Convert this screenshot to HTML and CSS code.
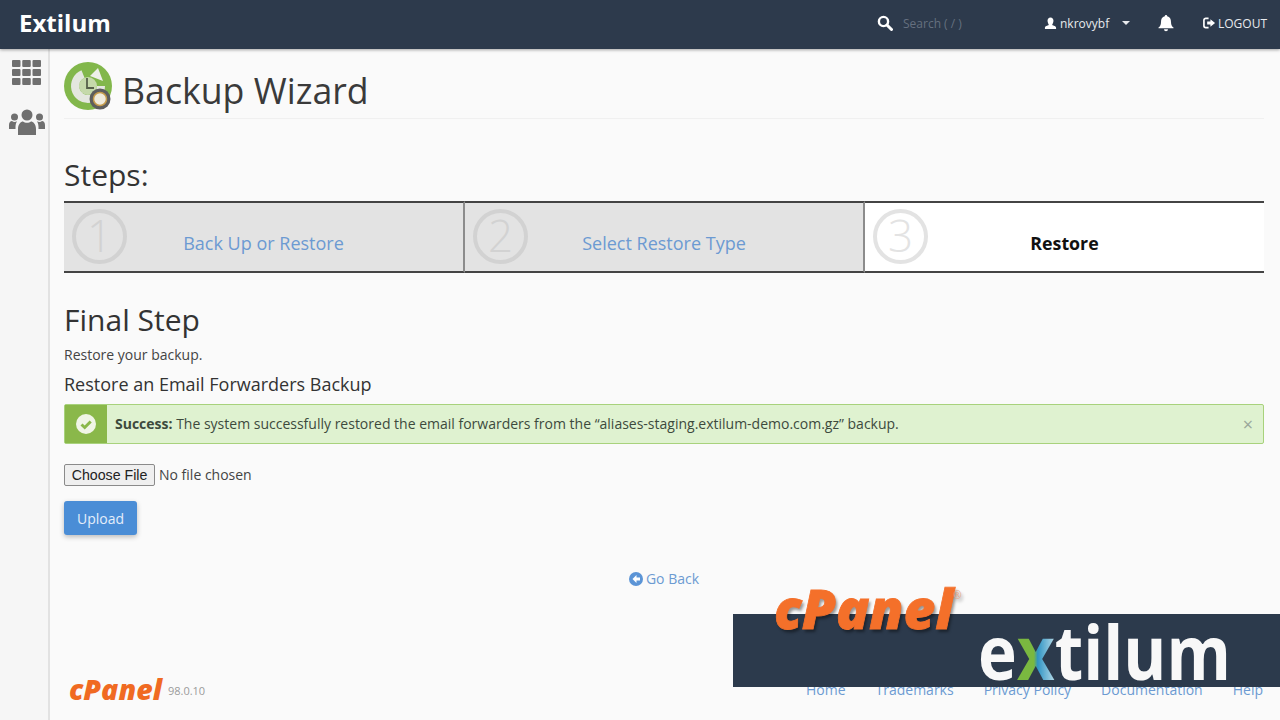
FILE: index.html
```html
<!DOCTYPE html>
<html lang="en">
<head>
  <meta charset="utf-8" />
  <title>Backup Wizard</title>
  <link rel="stylesheet" href="styles.css">
</head>
<body>
  <header class="topbar">
    <div class="brand">Extilum</div>
    <div class="top-right">
      <div class="search">
        <svg class="search-icon" viewBox="0 0 16 16"><circle cx="6.5" cy="6.5" r="4.6" fill="none" stroke="#fff" stroke-width="2.4"/><path d="M10 10l4.5 4.5" stroke="#fff" stroke-width="3" stroke-linecap="round"/></svg>
        <span class="search-text">Search ( / )</span>
      </div>
      <div class="user">
        <svg class="user-icon" viewBox="0 0 14 14"><path d="M7 .5c2 0 3.2 1.500 3.200 3.500S9 7.500 8.800 8.500c1.500.8 4.200 1 4.200 3V13H1v-1.500c0-2 2.700-2.200 4.200-3C5 7.500 3.800 6 3.800 4S5 .5 7 .5z" fill="#fff"/></svg>
        <span>nkrovybf</span>
        <span class="caret"></span>
      </div>
      <div class="bell">
        <svg viewBox="0 0 16 18" width="16" height="18"><path d="M8 1a1.200 1.200 0 0 1 1.200 1.300C12 3 13 5 13 8c0 3 1 4.500 2.500 5.500v.7H.5v-.7C2 12.500 3 11 3 8c0-3 1-5 3.800-5.700A1.200 1.200 0 0 1 8 1zM6 15.200h4a2 2 0 0 1-4 0z" fill="#fff"/></svg>
      </div>
      <div class="logout">
        <svg viewBox="0 0 14 12" width="13" height="12"><path d="M6 1H3a2 2 0 0 0-2 2v6a2 2 0 0 0 2 2h3" fill="none" stroke="#fff" stroke-width="1.800"/><path d="M4.500 4.500H8V2l5 4-5 4V7.500H4.500z" fill="#fff"/></svg>
        <span>LOGOUT</span>
      </div>
    </div>
  </header>

  <div class="layout">
    <aside class="sidebar">
      <svg class="side-grid" viewBox="0 0 29 25">
        <rect x="0" y="0" width="8.500" height="7" rx="1"/><rect x="10.250" y="0" width="8.500" height="7" rx="1"/><rect x="20.500" y="0" width="8.500" height="7" rx="1"/>
        <rect x="0" y="9" width="8.500" height="7" rx="1"/><rect x="10.250" y="9" width="8.500" height="7" rx="1"/><rect x="20.500" y="9" width="8.500" height="7" rx="1"/>
        <rect x="0" y="18" width="8.500" height="7" rx="1"/><rect x="10.250" y="18" width="8.500" height="7" rx="1"/><rect x="20.500" y="18" width="8.500" height="7" rx="1"/>
      </svg>
      <svg class="side-users" viewBox="0 0 36 26">
        <circle cx="18" cy="6" r="5.500"/><circle cx="5.500" cy="8" r="3.500"/><circle cx="30.500" cy="8" r="3.500"/>
        <path d="M9 26v-6c0-5 3-7.500 5-7.500 1 .8 2.400 1.300 4 1.300s3-.5 4-1.300c2 0 5 2.500 5 7.500v6z"/>
        <path d="M0 20v-4c0-2.500 1.500-4 3-4 .8.600 1.600.9 2.500.9 1 0 1.700-.2 2.500-.7-.9 1.500-1.500 3.500-1.500 5.800V20zM36 20v-4c0-2.500-1.500-4-3-4-.8.600-1.600.9-2.500.9-1 0-1.700-.2-2.500-.7.900 1.500 1.500 3.500 1.500 5.800V20z"/>
      </svg>
    </aside>

    <main class="content">
      <div class="page-head">
        <svg class="wizard-icon" viewBox="0 0 48 48">
          <circle cx="24" cy="24" r="24" fill="#82b74b"/>
          <circle cx="24" cy="24" r="9" fill="#c5d9aa"/>
          <path d="M19 12A13 13 0 1 0 37 24" fill="none" stroke="#e4e7df" stroke-width="8"/>
          <path d="M26 14l8-8 5 13z" fill="#eef0ea"/>
          <path d="M23 16v10h7" fill="none" stroke="#56604a" stroke-width="1.800"/>
          <circle cx="36" cy="37" r="10.500" fill="#5d5d5d"/>
          <circle cx="36" cy="37" r="6.500" fill="#efeadc" stroke="#c49a4a" stroke-width="1.500"/>
        </svg>
        <h1>Backup Wizard</h1>
      </div>

      <h2 class="steps-title">Steps:</h2>
      <div class="steps">
        <div class="step"><span class="num">1</span><a class="step-label">Back Up or Restore</a></div>
        <div class="step"><span class="num">2</span><a class="step-label">Select Restore Type</a></div>
        <div class="step current"><span class="num">3</span><span class="step-label">Restore</span></div>
      </div>

      <h2 class="final-title">Final Step</h2>
      <p class="intro">Restore your backup.</p>
      <h3 class="sub-title">Restore an Email Forwarders Backup</h3>

      <div class="alert">
        <div class="alert-icon">
          <svg viewBox="0 0 20 20" width="20" height="20"><circle cx="10" cy="10" r="10" fill="#f0f5e6"/><path d="M5.500 10.500l3.200 3 6-6" fill="none" stroke="#8ab84a" stroke-width="3"/></svg>
        </div>
        <div class="alert-text"><strong>Success:</strong> The system successfully restored the email forwarders from the “aliases-staging.extilum-demo.com.gz” backup.</div>
        <span class="alert-close">×</span>
      </div>

      <input class="file" type="file" />
      <button type="button" class="upload">Upload</button>

      <div class="go-back">
        <svg viewBox="0 0 14 14" width="14" height="14"><circle cx="7" cy="7" r="7" fill="#5b94d6"/><path d="M7.500 3L3.500 7l4 4V8.500H11v-3H7.500z" fill="#fff"/></svg>
        <a>Go Back</a>
      </div>

      <footer class="foot">
        <div class="foot-left"><span class="cp-small">cPanel</span><span class="version">98.0.10</span></div>
        <nav class="foot-links"><a>Home</a><a>Trademarks</a><a>Privacy Policy</a><a>Documentation</a><a>Help</a></nav>
      </footer>
    </main>
  </div>

  <div class="promo">
    <span class="cp-large">cPanel<sup>®</sup></span>
    <span class="ex-logo">e<span class="ex-x">x</span>tilum</span>
  </div>
</body>
</html>
```

FILE: styles.css
```css
* { box-sizing: border-box; }
html, body { height: 100%; }
body {
  margin: 0;
  overflow: hidden;
  background: #fafafa;
  color: #333;
  font-family: "Open Sans", sans-serif;
  font-size: 14px;
}
a { color: #6c9ad2; }

.topbar {
  height: 49px;
  background: #2d3a4c;
  display: flex;
  align-items: center;
  justify-content: space-between;
  box-shadow: 0 1px 3px rgba(0,0,0,.35);
  position: relative;
  padding-bottom: 3px;
}
.brand {
  margin-left: 19px;
  margin-bottom: 2px;
  color: #fff;
  font-size: 24px;
  font-weight: 700;
}
.top-right { display: flex; align-items: center; color: #e8eaed; font-size: 12px; }
.search { display: flex; align-items: center; width: 155px; }
.search-icon { width: 16px; height: 16px; margin-right: 10px; }
.search-text { color: #65707f; }
.user { display: flex; align-items: center; width: 122px; padding-left: 12px; }
.user-icon { width: 13px; height: 13px; margin-right: 3px; }
.caret {
  margin-left: 13px;
  border-top: 4px solid #e8eaed;
  border-left: 4px solid transparent;
  border-right: 4px solid transparent;
}
.bell { width: 49px; display: flex; justify-content: flex-start; padding-left: 4px; }
.logout { display: flex; align-items: center; gap: 2px; margin-right: 13px; width: 64px; white-space: nowrap; }

.layout { display: flex; height: 671px; }
.sidebar {
  width: 50px;
  flex: none;
  background: #f6f6f6;
  border-right: 2px solid #e2e2e2;
  display: flex;
  flex-direction: column;
  align-items: center;
  padding-top: 11px;
}
.sidebar svg { fill: #6f6f6f; }
.side-grid { width: 29px; height: 25px; margin-left: 5px; }
.side-users { width: 36px; height: 26px; margin-top: 24px; margin-left: 6px; }

.content {
  flex: 1;
  padding: 0 16px 0 14px;
  display: flex;
  flex-direction: column;
  min-width: 0;
}
.page-head {
  height: 70px;
  display: flex;
  align-items: flex-start;
  border-bottom: 1px solid #f0f0f0;
  padding-top: 13px;
}
.wizard-icon { width: 48px; height: 48px; margin-right: 10px; }
h1 { margin: 6px 0 0; font-size: 35.7px; font-weight: 400; line-height: 44px; color: #3a3a3a; }
h2 { font-weight: 400; font-size: 30px; line-height: 38px; color: #333; margin: 0; }
.steps-title { margin-top: 37px; }
.steps { display: flex; margin-top: 7px; height: 72px; }
.step {
  width: 400px;
  background: #e3e3e3;
  border-top: 2px solid #444;
  border-bottom: 2px solid #444;
  border-right: 2px solid #8c8c8c;
  display: flex;
  align-items: center;
  justify-content: center;
  position: relative;
}
.step:first-child { width: 401px; }
.step.current { background: #fff; border-right: 0; flex: 1; }
.num {
  position: absolute;
  left: 8px;
  top: 6px;
  width: 55px;
  height: 55px;
  border: 4px solid #d2d2d2;
  border-radius: 50%;
  color: #d2d2d2;
  font-size: 44px;
  font-weight: 300;
  line-height: 45px;
  text-align: center;
}
.current .num { border-color: #e3e3e3; color: #e3e3e3; }
.step-label { font-size: 18px; margin-top: 12px; }
.current .step-label { font-weight: 700; color: #111; font-size: 17.8px; }

.final-title { margin-top: 28px; }
.intro { margin: 6px 0 0; line-height: 20px; font-size: 14px; color: #444; }
.sub-title { margin: 7px 0 0; font-size: 18px; font-weight: 400; line-height: 24px; }

.alert {
  margin-top: 8px;
  height: 40px;
  display: flex;
  align-items: center;
  background: #dff2d0;
  border: 1px solid #a8d27c;
  border-radius: 2px;
}
.alert-icon {
  width: 42px;
  height: 38px;
  flex: none;
  background: #8ab84a;
  display: flex;
  align-items: center;
  justify-content: center;
}
.alert-text { flex: 1; padding: 0 0 2px 8px; font-size: 14px; color: #3d4a3d; }
.alert-close { color: #9aa79a; font-size: 18px; line-height: 1; margin-right: 10px; }

.file {
  margin-top: 20px;
  height: 22px;
  width: 260px;
  font-family: "Open Sans", sans-serif;
  font-size: 14px;
  color: #444;
}
.file::file-selector-button {
  font-family: "Liberation Sans", sans-serif;
  font-size: 14.2px;
  width: 91px;
  height: 22px;
  margin-right: 4px;
  color: #222;
  background: #efefef;
  border: 1px solid #8a8a8a;
  border-radius: 2px;
}
.upload {
  margin-top: 15px;
  width: 73px;
  height: 34px;
  background: #4a8dd6;
  color: #e4eefa;
  border: 0;
  border-radius: 3px;
  font-family: "Open Sans", sans-serif;
  font-size: 14px;
  box-shadow: 0 2px 5px rgba(0,0,0,.25);
}
.go-back {
  margin-top: 34px;
  display: flex;
  align-items: center;
  justify-content: center;
  gap: 3px;
  line-height: 20px;
}

.foot {
  margin-top: auto;
  margin-bottom: 19px;
  margin-right: 1px;
  display: flex;
  align-items: center;
  justify-content: space-between;
  padding-left: 5px;
}
.foot-left { display: flex; align-items: center; }
.cp-small, .cp-large {
  color: #f06a22;
  font-style: italic;
  font-weight: 800;
}
.cp-small { font-size: 28.5px; line-height: 24px; }
.version { color: #9a9a9a; font-size: 11px; margin-left: 6px; margin-top: 3px; }
.foot-links { display: flex; gap: 30px; font-size: 14px; }

.promo {
  position: absolute;
  left: 733px;
  top: 614px;
  width: 547px;
  height: 73px;
  background: #2c3a4c;
}
.cp-large {
  position: absolute;
  left: 41px;
  top: -41px;
  font-size: 55px;
  line-height: 70px;
  color: #f4702a;
  -webkit-text-stroke: .8px #f4702a;
  text-shadow: 2px 3px 3px rgba(0,0,0,.4);
}
.cp-large sup { font-size: 10px; font-weight: 400; color: #e9a98a; vertical-align: 30px; line-height: 0; -webkit-text-stroke: 0; }
.ex-logo {
  position: absolute;
  left: 245px;
  top: -5px;
  font-size: 75px;
  line-height: 84px;
  font-weight: 700;
  color: #f8f8f8;
  transform: scaleX(.875);
  transform-origin: left;
}
.ex-x {
  background: linear-gradient(90deg, #7ab840 0 45%, #2f94c4 55%, #b7dbe8 100%);
  -webkit-background-clip: text;
  background-clip: text;
  color: transparent;
}
```
